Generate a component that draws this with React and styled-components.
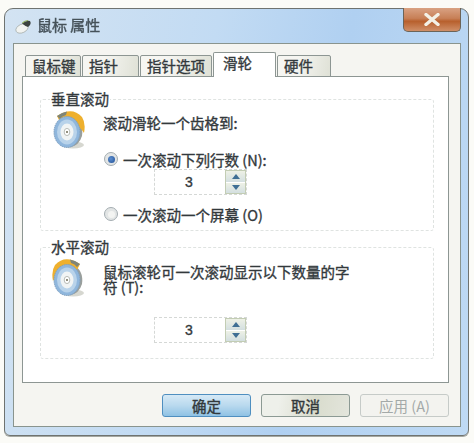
import React from "react";
import styled, { createGlobalStyle } from "styled-components";

const GlobalStyle = createGlobalStyle`
  html, body {
    margin: 0;
    padding: 0;
    background: #fbfbf7;
  }
  body {
    font-family: "Noto Sans CJK SC", "Liberation Sans", sans-serif;
    font-size: 14.5px;
    color: #33393c;
    -webkit-text-stroke: 0.35px #33393c;
  }
  * {
    box-sizing: border-box;
  }
`;

const Page = styled.div`
  width: 474px;
  height: 443px;
  padding: 8px 5px 7px 4px;
  filter: blur(0.5px);
`;

const Window = styled.div`
  height: 100%;
  display: flex;
  flex-direction: column;
  padding: 0 7px 8px 8px;
  border: 1px solid #6f7370;
  border-radius: 9px 9px 6px 6px;
  box-shadow: 0 1px 0 #a5a8a2;
  background: linear-gradient(100deg, #d3e3f2 0%, #c2dbf3 40%, #b0d0f1 65%, #bfdaf4 100%);
`;

const TitleBar = styled.div`
  height: 34px;
  flex: none;
  display: flex;
  align-items: flex-start;
`;

const TitleIcon = styled.svg`
  width: 19px;
  height: 16px;
  margin: 9px 3px 0 2px;
`;

const Title = styled.div`
  margin-top: 4px;
  line-height: 24px;
  font-size: 15px;
  color: #46525a;
  -webkit-text-stroke: 0.4px #46525a;
`;

const CloseButton = styled.div`
  width: 58px;
  height: 24px;
  margin: -1px 0 0 auto;
  display: flex;
  align-items: center;
  justify-content: center;
  border: 1px solid #6c6458;
  border-top: none;
  border-radius: 0 0 5px 5px;
  background: linear-gradient(180deg, #d9a283 0%, #c77f56 45%, #b8602d 58%, #cf8f68 100%);
`;

const Content = styled.div`
  flex: 1;
  display: flex;
  flex-direction: column;
  padding: 8px 11px 0 8px;
  border: 1px solid #89948e;
  background: #f5f5f1;
`;

const TabRow = styled.div`
  height: 25px;
  flex: none;
  display: flex;
  align-items: flex-end;
  gap: 1px;
  margin-bottom: -1px;
  padding-left: 3px;
  position: relative;
  z-index: 1;
`;

const Tab = styled.div`
  width: ${(p) => p.$width}px;
  height: ${(p) => (p.$active ? 25 : 22)}px;
  display: flex;
  align-items: center;
  padding: ${(p) => (p.$active ? "0 0 5px 9px" : "0 0 2px 6px")};
  border: 1px solid #8d9693;
  border-bottom: ${(p) => (p.$active ? "none" : "1px solid #8d9693")};
  border-radius: 2px 2px 0 0;
  background: ${(p) =>
    p.$active ? "#ffffff" : "linear-gradient(100deg, #f6f6f2 35%, #dfe1d6 100%)"};
`;

const Panel = styled.div`
  height: 307px;
  flex: none;
  display: flex;
  flex-direction: column;
  gap: 8px;
  padding: 14px 14px 0 17px;
  border: 1px solid #8d9693;
  background: #ffffff;
`;

const Group = styled.fieldset`
  margin: 0;
  min-width: 0;
  height: ${(p) => p.$height}px;
  padding: 0 0 0 11px;
  border: 1px dashed #dfe3e1;
  border-radius: 3px;
`;

const Legend = styled.legend`
  margin-left: -2px;
  padding: 0 1px;
  line-height: 16px;
`;

const GroupRow = styled.div`
  display: flex;
  align-items: flex-start;
`;

const WheelBox = styled.div`
  width: 51px;
  flex: none;
`;

const Body = styled.div`
  flex: 1;
  min-width: 0;
`;

const Prompt = styled.div`
  line-height: ${(p) => (p.$tight ? 15 : 20)}px;
  padding-top: ${(p) => p.$top}px;
  white-space: nowrap;
`;

const RadioRow = styled.div`
  display: flex;
  align-items: center;
  gap: 5px;
  height: 20px;
  margin: ${(p) => p.$margin};
  white-space: nowrap;
`;

const Radio = styled.span`
  width: 14px;
  height: 14px;
  margin-left: 1px;
  flex: none;
  display: flex;
  align-items: center;
  justify-content: center;
  border: 1px solid #a4adb1;
  border-radius: 50%;
  background: #e2e5e5;

  &::after {
    content: "";
    width: 7px;
    height: 7px;
    border-radius: 50%;
    background: ${(p) => (p.$on ? "radial-gradient(circle at 40% 40%, #5d8fd0, #1f4f96)" : "#f3f4f2")};
  }
`;

const Spin = styled.div`
  width: 93px;
  height: 26px;
  margin: ${(p) => p.$margin};
  display: flex;
  border: 1px dashed #d5d8d6;
`;

const SpinValue = styled.div`
  flex: 1;
  display: flex;
  align-items: center;
  justify-content: center;
  padding-right: 2px;
  font-family: "Liberation Sans", sans-serif;
  font-size: 14px;
`;

const SpinButtons = styled.div`
  width: 21px;
  flex: none;
  display: flex;
  flex-direction: column;
  gap: 1px;
  border: 1px solid #c3cdb4;
`;

const SpinButton = styled.div`
  flex: 1;
  display: flex;
  align-items: center;
  justify-content: center;
  background: linear-gradient(180deg, #eef1e6 0%, #d3dfe0 100%);

  &::after {
    content: "";
    border-left: 4px solid transparent;
    border-right: 4px solid transparent;
    ${(p) => (p.$up ? "border-bottom: 5px solid #3f6f94;" : "border-top: 5px solid #3f6f94;")}
  }
`;

const Footer = styled.div`
  flex: 1;
  display: flex;
  justify-content: flex-end;
  gap: 10px;
  padding: 11px 0 0;
`;

const Button = styled.div`
  width: 89px;
  height: 23px;
  display: flex;
  align-items: center;
  justify-content: center;
  border-radius: 3px;
  border: 1px solid ${(p) => (p.$primary ? "#4f8fc0" : p.$disabled ? "#c6cbc8" : "#8c9a94")};
  color: ${(p) => (p.$disabled ? "#a3a9a8" : "#33393c")};
  -webkit-text-stroke: ${(p) => (p.$disabled ? "0" : "0.4px")};
  background: ${(p) =>
    p.$primary
      ? "linear-gradient(180deg, #d6e9f6 0%, #b9d9ee 50%, #8fc2e4 100%)"
      : p.$disabled
        ? "#f3f3ef"
        : "linear-gradient(100deg, #eef0ea 20%, #d9dccd 60%, #e3e5dc 100%)"};
`;

const CloseMark = () => (
  <svg width="18" height="13" viewBox="0 0 18 13">
    <path
      d="M3 1.5 L15 11.5 M15 1.5 L3 11.5"
      stroke="#f3f1e6"
      strokeWidth="3.4"
      strokeLinecap="round"
    />
  </svg>
);

const MouseIcon = () => (
  <TitleIcon viewBox="0 0 19 16">
    <ellipse cx="7" cy="10.5" rx="6.5" ry="4.2" fill="#f1f3f1" stroke="#a3aaa7" strokeWidth="0.7" transform="rotate(-25 7 10.5)" />
    <path d="M7 5.5 Q11 2 15 3 Q17 6 13 9 Q10 8 7 5.5 Z" fill="#3b4240" />
    <path d="M7.5 5 Q10 2.5 13 2.5" stroke="#8fae5a" strokeWidth="1.2" fill="none" />
  </TitleIcon>
);

// scroll wheel picture, the band mirrors for the horizontal group
const Wheel = ({ $flip, style }) => (
  <svg width="34" height="40" viewBox="0 0 34 40" style={style}>
    <ellipse cx="21" cy="35" rx="11" ry="3.5" fill="#d6d7d0" />
    <path d="M20 6 Q32 12 30 26 Q27 36 18 37 Z" fill="#9a9f9c" />
    <g transform={$flip ? "translate(33 0) scale(-1 1)" : undefined}>
      <path d="M5 6 Q20 -4 30 7 Q34 13 32 23 Q26 12 8 12 Z" fill="#eeb02e" />
      <path d="M5 6 Q10 2 15 1.5 L14 5 Q10 6 8 9 Z" fill="#7f8578" />
    </g>
    <ellipse cx="15" cy="22" rx="13" ry="15.5" fill="#8fb6dc" stroke="#7f9fbe" strokeWidth="1" strokeDasharray="1.4 0.8" />
    <ellipse cx="15" cy="22" rx="10" ry="12.5" fill="#b9d3ea" />
    <ellipse cx="15" cy="22" rx="6.5" ry="8.5" fill="#f1f4f4" />
    <ellipse cx="15" cy="22" rx="2.8" ry="3.6" fill="#ffffff" stroke="#b9bdb8" strokeWidth="1" />
    <circle cx="15" cy="22" r="1" fill="#6e6a52" />
  </svg>
);

const App = () => {
  return (
    <>
      <GlobalStyle />
      <Page>
        <Window>
          <TitleBar>
            <MouseIcon />
            <Title>鼠标 属性</Title>
            <CloseButton>
              <CloseMark />
            </CloseButton>
          </TitleBar>
          <Content>
            <TabRow>
              <Tab $width={56}>鼠标键</Tab>
              <Tab $width={57}>指针</Tab>
              <Tab $width={72}>指针选项</Tab>
              <Tab $width={63} $active>
                滑轮
              </Tab>
              <Tab $width={54}>硬件</Tab>
            </TabRow>
            <Panel>
              <Group $height={140}>
                <Legend>垂直滚动</Legend>
                <GroupRow>
                  <WheelBox>
                    <Wheel style={{ marginTop: 3 }} />
                  </WheelBox>
                  <Body>
                    <Prompt $top={6}>滚动滑轮一个齿格到:</Prompt>
                    <RadioRow $margin="16px 0 0 0">
                      <Radio $on />
                      一次滚动下列行数 (N):
                    </RadioRow>
                    <Spin $margin="0 0 0 51px">
                      <SpinValue>3</SpinValue>
                      <SpinButtons>
                        <SpinButton $up />
                        <SpinButton />
                      </SpinButtons>
                    </Spin>
                    <RadioRow $margin="9px 0 0 0">
                      <Radio />
                      一次滚动一个屏幕 (O)
                    </RadioRow>
                  </Body>
                </GroupRow>
              </Group>
              <Group $height={120}>
                <Legend>水平滚动</Legend>
                <GroupRow>
                  <WheelBox>
                    <Wheel $flip style={{ marginTop: 3 }} />
                  </WheelBox>
                  <Body>
                    <Prompt $top={9} $tight>
                      鼠标滚轮可一次滚动显示以下数量的字
                      <br />
                      符 (T):
                    </Prompt>
                    <Spin $margin="23px 0 0 51px">
                      <SpinValue>3</SpinValue>
                      <SpinButtons>
                        <SpinButton $up />
                        <SpinButton />
                      </SpinButtons>
                    </Spin>
                  </Body>
                </GroupRow>
              </Group>
            </Panel>
            <Footer>
              <Button $primary>确定</Button>
              <Button>取消</Button>
              <Button $disabled>应用 (A)</Button>
            </Footer>
          </Content>
        </Window>
      </Page>
    </>
  );
};

export default App;
